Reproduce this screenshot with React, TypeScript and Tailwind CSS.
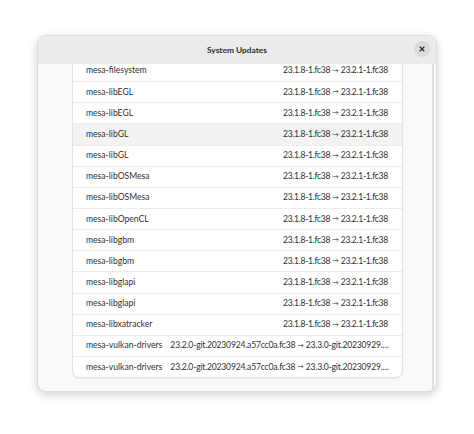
import { X } from "lucide-react";

interface Pkg {
  name: string;
  from: string;
  to: string;
  long?: boolean;
}

const std = { from: "23.1.8-1.fc38", to: "23.2.1-1.fc38" };
const vk = { from: "23.2.0-git.20230924.a57cc0a.fc38", to: "23.3.0-git.20230929.…", long: true };

const rows: Pkg[] = [
  { name: "mesa-filesystem", ...std },
  { name: "mesa-libEGL", ...std },
  { name: "mesa-libEGL", ...std },
  { name: "mesa-libGL", ...std },
  { name: "mesa-libGL", ...std },
  { name: "mesa-libOSMesa", ...std },
  { name: "mesa-libOSMesa", ...std },
  { name: "mesa-libOpenCL", ...std },
  { name: "mesa-libgbm", ...std },
  { name: "mesa-libgbm", ...std },
  { name: "mesa-libglapi", ...std },
  { name: "mesa-libglapi", ...std },
  { name: "mesa-libxatracker", ...std },
  { name: "mesa-vulkan-drivers", ...vk },
  { name: "mesa-vulkan-drivers", ...vk },
];

export default function App() {
  return (
    <div className="w-[474px] h-[434px] bg-white pt-[35px] pl-[37px] font-['Lato',sans-serif]">
      {/* dialog window */}
      <div className="w-[400px] h-[357px] flex flex-col rounded-[9px] overflow-hidden bg-[#fafafa] border border-[#dcdcdc] shadow-[0_3px_10px_rgba(0,0,0,0.18)]">
        <div className="h-[28px] shrink-0 relative flex items-center justify-center bg-[#ebebeb]">
          <span className="text-[8.4px] font-bold text-[#2e2e2e]">System Updates</span>
          <button className="absolute right-[6px] top-[5px] w-[16px] h-[16px] rounded-full bg-[#dcdcdc] flex items-center justify-center text-[#2a2a2a]">
            <X size={8} strokeWidth={3.5} />
          </button>
        </div>

        <div className="flex-1 relative overflow-hidden">
          <div className="mt-[-5px] ml-[34px] w-[331px] rounded-b-[7px] bg-white border border-[#e2e2e2] shadow-[0_1px_2px_rgba(0,0,0,0.06)]">
            {rows.map((row, i) => (
              <div
                key={i}
                className={`h-[21.15px] flex items-center justify-between gap-[8px] pl-[13px] pr-[14px] text-[8.6px] text-[#303030] whitespace-nowrap ${
                  i > 0 ? "border-t border-[#ececec]" : ""
                } ${i === 3 ? "bg-[#f3f3f3]" : ""}`}
              >
                <span>{row.name}</span>
                <span className={`flex items-center ${row.long ? "tracking-[-0.2px]" : "tracking-[-0.3px]"}`}>
                  {row.from}
                  <span className="text-[6.5px] mx-[2px] tracking-normal">→</span>
                  {row.to}
                </span>
              </div>
            ))}
          </div>
          {/* scrollbar */}
          <div className="absolute right-[2px] top-0 bottom-0 w-[2px] bg-[#dedede]" />
        </div>
      </div>
    </div>
  );
}
